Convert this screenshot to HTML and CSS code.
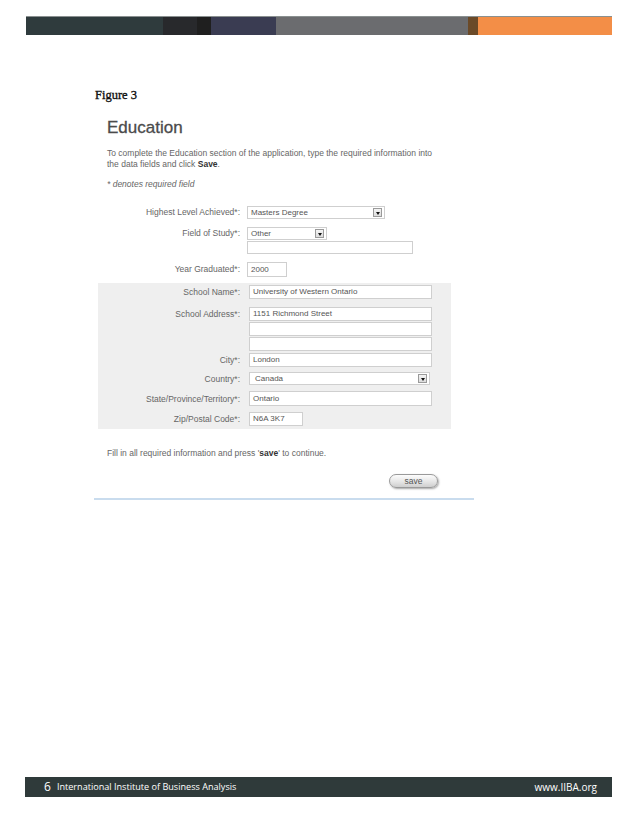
FILE: index.html
```html
<!DOCTYPE html>
<html>
<head>
<meta charset="utf-8">
<link rel="stylesheet" href="styles.css">
</head>
<body>
<div class="page">
  <div class="topbar">
    <span class="seg s1"></span><span class="seg s2"></span><span class="seg s3"></span><span class="seg s4"></span><span class="seg s5"></span><span class="seg s6"></span><span class="seg s7"></span>
  </div>

  <div class="figure">Figure 3</div>

  <div class="intro">
    <h1 class="title">Education</h1>
    <p class="desc">To complete the Education section of the application, type the required information into the data fields and click <b>Save</b>.</p>
    <p class="note">* denotes required field</p>
  </div>

  <div class="form upper">
    <div class="row r1">
      <div class="label">Highest Level Achieved*:</div>
      <div class="ctl"><div class="field select w138">Masters Degree<span class="arrow"></span></div></div>
    </div>
    <div class="row r2">
      <div class="label">Field of Study*:</div>
      <div class="ctl">
        <div class="field select w80">Other<span class="arrow"></span></div>
        <div class="field w166 h13 gap1"></div>
      </div>
    </div>
    <div class="row r3">
      <div class="label">Year Graduated*:</div>
      <div class="ctl"><div class="field w40 h15">2000</div></div>
    </div>
  </div>

  <div class="form panel">
    <div class="row p1">
      <div class="label">School Name*:</div>
      <div class="ctl"><div class="field w183">University of Western Ontario</div></div>
    </div>
    <div class="row p2">
      <div class="label">School Address*:</div>
      <div class="ctl">
        <div class="field w183">1151 Richmond Street</div>
        <div class="field w183 gap1"></div>
        <div class="field w183 gap1"></div>
      </div>
    </div>
    <div class="row p3">
      <div class="label">City*:</div>
      <div class="ctl"><div class="field w183">London</div></div>
    </div>
    <div class="row p4">
      <div class="label">Country*:</div>
      <div class="ctl"><div class="field select w181 h13 pad5">Canada<span class="arrow"></span></div></div>
    </div>
    <div class="row p5">
      <div class="label">State/Province/Territory*:</div>
      <div class="ctl"><div class="field w183 h15">Ontario</div></div>
    </div>
    <div class="row p6">
      <div class="label">Zip/Postal Code*:</div>
      <div class="ctl"><div class="field w54">N6A 3K7</div></div>
    </div>
  </div>

  <p class="fill">Fill in all required information and press '<b>save</b>' to continue.</p>

  <div class="actions"><span class="save">save</span></div>
  <div class="rule"></div>

  <div class="footer">
    <span class="pagenum">6</span>
    <span class="org">International Institute of Business Analysis</span>
    <span class="url">www.IIBA.org</span>
  </div>
</div>
</body>
</html>
```

FILE: styles.css
```css
* { box-sizing: border-box; }
html, body { margin: 0; padding: 0; background: #fff; }
body { font-family: "Liberation Sans", Arial, sans-serif; }

.page {
  width: 638px;
  height: 826px;
  display: flex;
  flex-direction: column;
  overflow: hidden;
}

.topbar {
  margin: 16px 0 0 26px;
  width: 586px;
  height: 19px;
  display: flex;
  border-top: 1px solid #8a9090;
}
.seg { display: block; height: 100%; }
.s1 { width: 137px; background: #2f3b3d; }
.s2 { width: 34px; background: #28292c; }
.s3 { width: 14px; background: #1f1f1f; }
.s4 { width: 65px; background: #3a3c52; }
.s5 { width: 192px; background: #6b6c6f; }
.s6 { width: 10px; background: #6b4a28; }
.s7 { width: 134px; background: #f38e47; }

.figure {
  margin: 53px 0 0 95px;
  font-family: "Liberation Serif", "Times New Roman", serif;
  font-size: 12.5px;
  color: #111;
  line-height: 15px;
  -webkit-text-stroke: 0.35px #111;
}

.intro { margin: 15px 0 0 107px; width: 332px; }
.title {
  margin: 0;
  font-size: 17px;
  font-weight: normal;
  color: #4b4b4b;
  line-height: 20px;
  -webkit-text-stroke: 0.3px #4b4b4b;
}
.desc {
  margin: 10px 0 0 0;
  font-size: 8.5px;
  line-height: 11px;
  color: #666;
}
.desc b { color: #333; font-size: 8.5px; }
.note {
  margin: 9px 0 0 0;
  font-size: 8.5px;
  font-style: italic;
  color: #666;
  line-height: 11px;
}

.form { margin-left: 98px; width: 353px; }
.row {
  display: grid;
  grid-template-columns: 142px 1fr;
  column-gap: 7px;
  align-items: start;
}
.label {
  text-align: right;
  font-size: 8.5px;
  color: #666;
  line-height: 13px;
  white-space: nowrap;
}
.ctl { display: flex; flex-direction: column; align-items: flex-start; }

.field {
  position: relative;
  height: 14px;
  border: 1px solid #cfcfcf;
  background: #fff;
  font-size: 8px;
  color: #555;
  line-height: 12px;
  padding-left: 3px;
  white-space: nowrap;
}
.h13 { height: 13px; line-height: 11px; }
.h15 { height: 15px; line-height: 13px; }
.gap1 { margin-top: 1px; }
.pad5 { padding-left: 5px; }
.w138 { width: 138px; }
.w80 { width: 80px; }
.w166 { width: 166px; }
.w40 { width: 40px; }
.w183 { width: 183px; }
.w181 { width: 181px; }
.w54 { width: 54px; }

.select { height: 13px; line-height: 11px; }
.arrow {
  position: absolute;
  right: 2px;
  top: 1px;
  width: 9px;
  height: 9px;
  border: 1px solid #9a9a9a;
  background: linear-gradient(#f4f4f4, #dcdcdc);
}
.arrow::after {
  content: "";
  position: absolute;
  left: 1.5px;
  top: 2.5px;
  border-left: 2.5px solid transparent;
  border-right: 2.5px solid transparent;
  border-top: 3px solid #111;
}

.upper { margin-top: 16px; }
.upper .r2 { margin-top: 8px; }
.upper .r3 { margin-top: 8px; }
.upper .r3 .label { line-height: 15px; }

.panel {
  margin-top: 6px;
  background: #efefef;
  padding: 2px 0 3px 0;
}
.panel .row { column-gap: 9px; }
.panel .label { line-height: 14px; }
.panel .p2 { margin-top: 8px; }
.panel .p3 { margin-top: 2px; }
.panel .p4 { margin-top: 5px; }
.panel .p5 { margin-top: 5px; }
.panel .p5 .label { line-height: 16px; }
.panel .p6 { margin-top: 5px; }

.fill {
  margin: 19px 0 0 107px;
  font-size: 8.5px;
  color: #666;
  line-height: 11px;
}
.fill b { color: #333; }

.actions {
  margin: 15px 0 0 389px;
  display: flex;
}
.save {
  display: block;
  width: 49px;
  height: 14px;
  border: 1px solid #9a9a9a;
  border-radius: 7px;
  background: linear-gradient(#fdfdfd 0%, #e6e6e6 55%, #cfcfcf 100%);
  box-shadow: 1px 1px 2px rgba(0,0,0,0.35);
  font-size: 8.5px;
  color: #555;
  text-align: center;
  line-height: 12px;
}

.rule {
  margin: 10px 0 0 94px;
  width: 380px;
  height: 2px;
  background: #c9dcee;
}

.footer {
  margin: auto 0 29px 25px;
  width: 587px;
  height: 20px;
  background: #2f3a3a;
  display: flex;
  align-items: center;
  padding: 0 15px 0 19px;
  color: #fff;
  font-family: "Open Sans", "Liberation Sans", sans-serif;
}
.pagenum { font-size: 12px; line-height: 20px; margin-right: 6px; }
.org { font-size: 9.1px; line-height: 20px; }
.url { margin-left: auto; font-size: 10px; line-height: 20px; }
```
